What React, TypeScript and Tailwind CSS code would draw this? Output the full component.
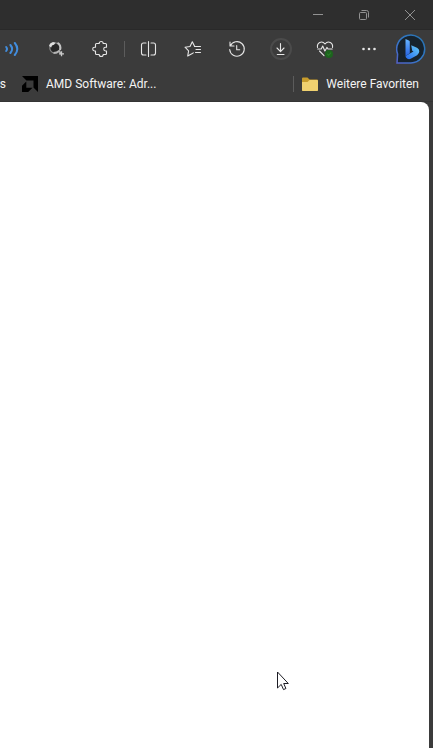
import type { ReactNode } from "react";

type IconButtonProps = {
  label: string;
  children: ReactNode;
};

function WindowButton({ label, children }: IconButtonProps) {
  return (
    <button
      aria-label={label}
      className="flex h-full w-[46px] shrink-0 items-center justify-center text-[#929292] hover:bg-[#3b3b3b]"
    >
      {children}
    </button>
  );
}

function ToolbarButton({ label, children }: IconButtonProps) {
  return (
    <button
      aria-label={label}
      className="flex h-8 w-11 shrink-0 items-center justify-center text-[#e6e6e6]"
    >
      {children}
    </button>
  );
}

function Icon({ children }: { children: ReactNode }) {
  return (
    <svg
      viewBox="0 0 18 18"
      className="h-[18px] w-[18px]"
      fill="none"
      stroke="currentColor"
      strokeWidth="1.1"
      strokeLinecap="round"
      strokeLinejoin="round"
    >
      {children}
    </svg>
  );
}

function TitleBar() {
  return (
    <header className="flex h-[30px] items-center justify-end border-b border-[#292929] bg-[#2e2e2e]">
      <WindowButton label="Minimieren">
        <svg viewBox="0 0 12 12" className="h-3 w-3" fill="none" stroke="currentColor">
          <path d="M1 5.5h10" />
        </svg>
      </WindowButton>
      <WindowButton label="Verkleinern">
        <svg viewBox="0 0 12 12" className="h-3 w-3" fill="none" stroke="currentColor">
          <rect x="1.5" y="3.5" width="7" height="7" rx="1" />
          <path d="M3.5 1.5h5a2 2 0 0 1 2 2v5" />
        </svg>
      </WindowButton>
      <WindowButton label="Schließen">
        <svg viewBox="0 0 12 12" className="h-3 w-3" fill="none" stroke="currentColor">
          <path d="M1 1l10 10M11 1L1 11" />
        </svg>
      </WindowButton>
    </header>
  );
}

function BingLogo() {
  return (
    <svg viewBox="0 0 30 30" className="h-[30px] w-[30px]">
      <defs>
        <linearGradient id="bubble" x1="0" y1="1" x2="1" y2="0">
          <stop offset="0" stopColor="#5360c8" />
          <stop offset="0.45" stopColor="#3478c8" />
          <stop offset="1" stopColor="#2672ae" />
        </linearGradient>
        <linearGradient id="stem" x1="0" y1="0" x2="0" y2="1">
          <stop offset="0" stopColor="#67b5ff" />
          <stop offset="1" stopColor="#2763e3" />
        </linearGradient>
        <linearGradient id="bowl" x1="0" y1="1" x2="1" y2="0">
          <stop offset="0" stopColor="#2469ef" />
          <stop offset="1" stopColor="#66ccf8" />
        </linearGradient>
      </defs>
      <path
        d="M1 29l.6-9A14 14 0 1 1 15 29Z"
        fill="#17232d"
        stroke="url(#bubble)"
        strokeWidth="1.5"
      />
      <path d="M9.5 5l3.4 1.4q.9.4.9 1.4v11.5L9.5 22Z" fill="url(#stem)" />
      <path
        d="M15.2 11.2l5.8 2.5q2.3 1 2.3 3.6 0 2.5-2.2 3.9l-6.4 3.6q-1.7.8-3.3 0-1.9-1-1.9-2.8l8-4.6-1.3-.7Z"
        fill="url(#bowl)"
      />
    </svg>
  );
}

function Toolbar() {
  return (
    <div className="flex h-[38px] items-center justify-end overflow-hidden pr-0.5">
      <ToolbarButton label="Laut vorlesen">
        <svg
          viewBox="0 0 16 16"
          className="h-4 w-4 text-[#428ddd]"
          fill="none"
          stroke="currentColor"
          strokeWidth="2"
          strokeLinecap="round"
        >
          <path d="M2.2 6q1.6 2 0 4M6.4 4q3.4 4 0 8M10.8 2q5 6 0 12" />
        </svg>
      </ToolbarButton>
      <ToolbarButton label="Bildersuche">
        <svg viewBox="0 0 18 18" className="h-[18px] w-[18px]" fill="none">
          <circle cx="8" cy="8" r="5.2" fill="#262626" stroke="#858585" strokeWidth="1.2" />
          <path d="M2 6q.5-3 4-4l2.5.8-1.5 2-2 .7-.8 2Z" fill="#dddddd" />
          <path d="M10.5 2.8q4 2.2 2.5 7.2" stroke="#c4c4c4" strokeWidth="2" />
          <path d="M6.5 13q3.5 0 5.5-2l2.8 3.5" stroke="#b4b4b4" strokeWidth="1.8" />
          <path d="M12 13.8h5M14.5 11.3v5" stroke="#c9c9c9" strokeWidth="1.3" />
        </svg>
      </ToolbarButton>
      <ToolbarButton label="Erweiterungen">
        <Icon>
          <path d="M5.5 3.5h2.7a2 2 0 0 1 4 0h2.3q1 0 1 1v2.7h-.9a1.9 1.9 0 0 0 0 3.8h.9v2.5q0 1-1 1h-2.3a2 2 0 0 1-4 0H5.500q-1 0-1-1V11h-.9a1.9 1.9 0 0 1 0-3.800h.9V4.500q0-1 1-1Z" />
        </Icon>
      </ToolbarButton>
      <div className="mx-0.5 h-4 w-px shrink-0 bg-[#5c5c5c]" />
      <ToolbarButton label="Bildschirm teilen">
        <Icon>
          <path d="M6 3H3.5q-2 0-2 2v8q0 2 2 2H6M11 3h2.500q2 0 2 2v8q0 2-2 2H11M8.500 1.500v15" />
        </Icon>
      </ToolbarButton>
      <ToolbarButton label="Favoriten">
        <Icon>
          <path d="M10.5 6.5h6M12 9.5h4.5M11.5 12.5h5M11 6.5h-.3L8.3 1.8 6 6.5l-5 .7 3.6 3.6-.9 5.2 4.6-2.5 1-.6" />
        </Icon>
      </ToolbarButton>
      <ToolbarButton label="Verlauf">
        <Icon>
          <path d="M2 2v4h4M2.3 6A7.3 7.3 0 1 1 1.7 9.5M8.7 5.5v4.2h3" />
        </Icon>
      </ToolbarButton>
      <ToolbarButton label="Downloads">
        <svg
          viewBox="0 0 22 22"
          className="h-[22px] w-[22px]"
          fill="none"
          stroke="currentColor"
          strokeWidth="1.1"
          strokeLinecap="round"
          strokeLinejoin="round"
        >
          <circle cx="11" cy="11" r="10" stroke="#4b4b4b" strokeWidth="2" />
          <path d="M10.5 5.5v8M7 10l3.5 3.7L14 10M7.3 16.5h6.7" />
        </svg>
      </ToolbarButton>
      <ToolbarButton label="Browser-Essentials">
        <Icon>
          <path d="M1.5 7.5C.7 3 5.7 0 9 4c3.3-4 8.3-1 7.5 3.5M1.8 9h3.4l1.5-3 2.2 5 2-3.6L12 9h4.2M3.5 11L8 15.7" />
          <circle cx="13" cy="14" r="4" fill="#1c651d" stroke="none" />
          <path d="M11.3 14l1.3 1.3 2.2-2.5" stroke="#2b7a29" />
        </Icon>
      </ToolbarButton>
      <ToolbarButton label="Einstellungen und mehr">
        <Icon>
          <g fill="currentColor" stroke="none">
            <circle cx="3.5" cy="9" r="1.3" />
            <circle cx="9" cy="9" r="1.3" />
            <circle cx="14.5" cy="9" r="1.3" />
          </g>
        </Icon>
      </ToolbarButton>
      <button aria-label="Bing" className="flex h-[38px] w-10 shrink-0 items-center justify-center">
        <BingLogo />
      </button>
    </div>
  );
}

function FavoritesBar() {
  return (
    <nav className="flex h-[34px] items-center justify-between border-b border-[#343434] pr-3.5 pb-0.5 text-xs whitespace-nowrap text-[#f4f4f4]">
      <div className="flex items-center">
        <a href="#" className="mr-4 flex w-1.5 justify-end overflow-hidden">
          es
        </a>
        <a href="#" className="flex items-center gap-2">
          <svg viewBox="0 0 16 16" className="h-4 w-4" fill="#000000">
            <path d="M0 0h16v16l-4.5-4.5v-7h-7Z" />
            <path d="M4.3 5.5v6.2h6.2L6.2 16H0V9.8Z" />
          </svg>
          AMD Software: Adr...
        </a>
      </div>
      <div className="flex items-center">
        <div className="mr-2 h-4 w-px bg-[#5c5c5c]" />
        <button className="flex items-center gap-2">
          <svg viewBox="0 0 16 16" className="h-4 w-4">
            <path d="M0 2.5q0-1 1-1h4.5l2 2H15q1 0 1 1V14q0 1-1 1H1q-1 0-1-1Z" fill="#c79c2c" />
            <path d="M0 6h5.5l2-2H15q1 0 1 1v9q0 1-1 1H1q-1 0-1-1Z" fill="#f0d170" />
          </svg>
          Weitere Favoriten
        </button>
      </div>
    </nav>
  );
}

function Cursor() {
  return (
    <svg
      viewBox="0 0 13 20"
      className="absolute right-[140px] bottom-[57px] h-5 w-[13px]"
      fill="#ffffff"
      stroke="#1c1c24"
      strokeWidth="1"
      strokeLinejoin="round"
    >
      <path d="M1.5 1v16l3.7-3.6 2.3 5.2 2.4-1.1-2.2-5h4.6Z" />
    </svg>
  );
}

export default function App() {
  return (
    <div className="flex min-h-screen flex-col bg-[#3b3b3b] font-['Roboto','Noto_Sans',sans-serif]">
      <TitleBar />
      <Toolbar />
      <FavoritesBar />
      <main className="relative mr-1 flex-1 rounded-tr-lg bg-white">
        <Cursor />
      </main>
    </div>
  );
}
